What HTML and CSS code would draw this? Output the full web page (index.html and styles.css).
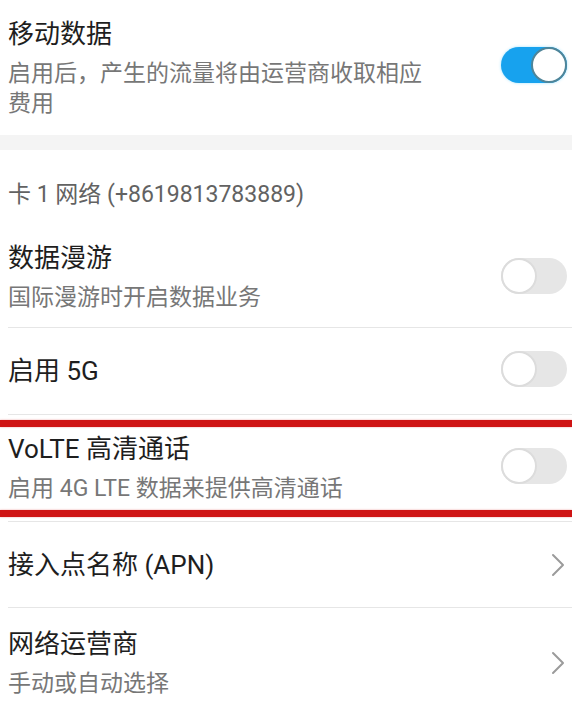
FILE: index.html
```html
<!DOCTYPE html>
<html lang="zh-CN">
<head>
<meta charset="utf-8">
<title>移动网络</title>
<link rel="stylesheet" href="styles.css">
</head>
<body>
<div class="page">
  <div class="item item-data">
    <div class="text text-narrow">
      <div class="title">移动数据</div>
      <div class="sub">启用后，产生的流量将由运营商收取相应费用</div>
    </div>
    <div class="switch on"><span class="knob"></span></div>
  </div>
  <div class="band"></div>
  <div class="header">卡 1 网络 (+8619813783889)</div>
  <div class="item item-roam">
    <div class="text">
      <div class="title">数据漫游</div>
      <div class="sub">国际漫游时开启数据业务</div>
    </div>
    <div class="switch"><span class="knob"></span></div>
  </div>
  <div class="item item-5g">
    <div class="text">
      <div class="title">启用 5G</div>
    </div>
    <div class="switch"><span class="knob"></span></div>
  </div>
  <div class="item item-volte">
    <span class="mark mark-top"></span>
    <div class="text">
      <div class="title">VoLTE 高清通话</div>
      <div class="sub">启用 4G LTE 数据来提供高清通话</div>
    </div>
    <div class="switch"><span class="knob"></span></div>
    <span class="mark mark-bottom"></span>
  </div>
  <div class="item item-apn">
    <div class="text">
      <div class="title">接入点名称 (APN)</div>
    </div>
    <svg class="chev" width="14" height="24" viewBox="0 0 14 24"><polyline points="2,2 12,12 2,22" fill="none" stroke="#9b9b9b" stroke-width="2" stroke-linecap="round" stroke-linejoin="round"/></svg>
  </div>
  <div class="item item-op">
    <div class="text">
      <div class="title">网络运营商</div>
      <div class="sub">手动或自动选择</div>
    </div>
    <svg class="chev" width="14" height="24" viewBox="0 0 14 24"><polyline points="2,2 12,12 2,22" fill="none" stroke="#9b9b9b" stroke-width="2" stroke-linecap="round" stroke-linejoin="round"/></svg>
  </div>
</div>
</body>
</html>
```
FILE: styles.css
```css
html, body {
  margin: 0;
  padding: 0;
  background: #ffffff;
}
body {
  font-family: Roboto, "Noto Sans CJK SC", sans-serif;
  color: #1f1f1f;
  width: 572px;
  overflow: hidden;
}
.page {
  display: flex;
  flex-direction: column;
}
.item {
  position: relative;
  display: flex;
  align-items: center;
  margin-left: 8px;
  padding-right: 5px;
  border-bottom: 1px solid #e6e6e6;
  box-sizing: border-box;
}
.text {
  flex: 1;
  display: flex;
  flex-direction: column;
  gap: 8px;
  min-width: 0;
}
.text-narrow {
  flex: 0 0 424px;
  margin-right: auto;
}
.title {
  font-size: 26px;
  line-height: 34px;
  color: #1e1e1e;
}
.sub {
  font-size: 23px;
  line-height: 30px;
  color: #777777;
}
.item-data {
  height: 135px;
  border-bottom: none;
}
.item-data .switch {
  margin-bottom: 5px;
}
.band {
  height: 15px;
  background: #f4f4f4;
}
.header {
  padding: 30px 0 16px 8px;
  font-size: 23px;
  line-height: 30px;
  color: #626262;
}
.item-roam { height: 102px; }
.item-5g { height: 87px; }
.item-volte { height: 107px; }
.item-apn { height: 86px; }
.item-op { height: 110px; border-bottom: none; }
.item-roam .switch { margin-top: -2px; }
.item-5g .switch { margin-top: -4px; }
.item-volte .switch { margin-top: -4px; }

.switch {
  position: relative;
  flex: 0 0 auto;
  width: 66px;
  height: 36px;
  border-radius: 18px;
  background: #e6e6e6;
  box-sizing: border-box;
}
.switch .knob {
  position: absolute;
  top: 0;
  left: 0;
  width: 36px;
  height: 36px;
  border-radius: 50%;
  background: #ffffff;
  border: 2px solid #dcdcdc;
  box-sizing: border-box;
}
.switch.on {
  background: #17a2ee;
  box-shadow: 0 0 3px rgba(40, 190, 255, 0.45);
}
.switch.on .knob {
  left: 30px;
  border-color: #4f8599;
}
.chev {
  flex: 0 0 auto;
  margin-right: 2px;
}
.mark {
  position: absolute;
  left: -8px;
  right: 0;
  height: 7px;
  background: #cf1414;
  box-shadow: 0 0 2px rgba(220, 40, 40, 0.5);
}
.mark-top { top: 5px; }
.mark-bottom { top: 95px; }
```
